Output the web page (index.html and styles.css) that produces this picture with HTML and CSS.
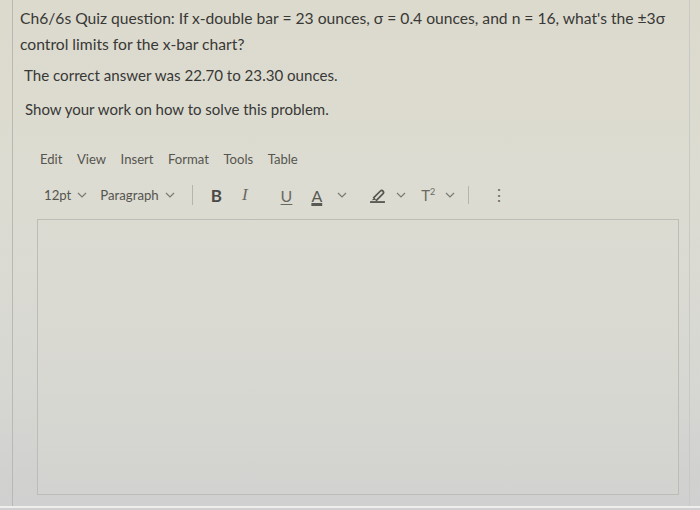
FILE: index.html
```html
<!DOCTYPE html>
<html>
<head>
<meta charset="utf-8">
<link rel="stylesheet" href="styles.css">
</head>
<body>
<div class="page">
  <div class="frame">
    <p class="q">Ch6/6s Quiz question: If x-double bar = 23 ounces, σ = 0.4 ounces, and n = 16, what's the ±3σ control limits for the x-bar chart?</p>
    <p class="p1">The correct answer was 22.70 to 23.30 ounces.</p>
    <p class="p2">Show your work on how to solve this problem.</p>
    <div class="editor">
      <div class="menu">
        <span>Edit</span><span>View</span><span>Insert</span><span>Format</span><span>Tools</span><span>Table</span>
      </div>
      <div class="toolbar">
        <span class="drop">12pt <svg class="chev" viewBox="0 0 10 6"><path d="M1 1l4 4 4-4"/></svg></span>
        <span class="drop para">Paragraph <svg class="chev" viewBox="0 0 10 6"><path d="M1 1l4 4 4-4"/></svg></span>
        <span class="sep"></span>
        <span class="btn b">B</span>
        <span class="btn i">I</span>
        <span class="btn u">U</span>
        <span class="btn a">A</span>
        <svg class="chev sm first" viewBox="0 0 10 6"><path d="M1 1l4 4 4-4"/></svg>
        <svg class="pen" viewBox="0 0 16 14"><path d="M4 9.5 L10.5 3 Q12 1.6 13.2 2.8 Q14.4 4 13 5.5 L6.5 12" fill="none"/><path d="M2.5 11.5 L5 9 L7 11 Z" class="fill"/><rect x="1" y="12.3" width="14" height="1.7" class="fill"/></svg>
        <svg class="chev sm" viewBox="0 0 10 6"><path d="M1 1l4 4 4-4"/></svg>
        <span class="btn t">T<sup>2</sup></span>
        <svg class="chev sm" viewBox="0 0 10 6"><path d="M1 1l4 4 4-4"/></svg>
        <span class="sep sep2"></span>
        <span class="more">⋮</span>
      </div>
      <div class="area"></div>
    </div>
  </div>
</div>
</body>
</html>
```
FILE: styles.css
```css
html, body {
  margin: 0;
  padding: 0;
}
body {
  width: 700px;
  height: 510px;
  overflow: hidden;
  font-family: Lato, "Open Sans", sans-serif;
  color: #383836;
  background: linear-gradient(180deg, #dcdacd 0%, #dddcd2 35%, #d8d8d3 70%, #cfd0cf 100%);
}
.page {
  height: 508px;
  border-bottom: 2px solid #eeeeec;
  box-sizing: border-box;
}
.frame {
  margin-left: 12px;
  margin-right: 10px;
  height: 100%;
  border-left: 1px solid #b9b8b2;
  border-right: 1px solid #c8c8c4;
  padding: 5px 0 0 7px;
  box-sizing: border-box;
}
.q {
  margin: 0;
  font-size: 15.65px;
  line-height: 26px;
  width: 655px;
}
.p1 {
  margin: 5px 0 0 4px;
  font-size: 15.1px;
  line-height: 26px;
}
.p2 {
  margin: 8px 0 0 5px;
  font-size: 15px;
  line-height: 26px;
}
.editor {
  margin: 28px 0 0 14px;
}
.menu {
  display: flex;
  gap: 14.5px;
  font-size: 13.1px;
  color: #55554f;
  margin-left: 6px;
  line-height: 18px;
}
.toolbar {
  display: flex;
  align-items: center;
  height: 22px;
  margin-top: 16px;
  margin-left: 10px;
  font-size: 13.2px;
  color: #55554f;
}
.drop {
  display: flex;
  align-items: center;
  gap: 6px;
}
.para {
  margin-left: 13px;
}
.chev {
  width: 10px;
  height: 6px;
  fill: none;
  stroke: #7a7a74;
  stroke-width: 1.2;
}
.chev.sm {
  margin-left: 10px;
}
.chev.first {
  margin-left: 15px;
}
.sep {
  width: 1px;
  height: 20px;
  background: #b5b4ad;
  margin: 0 16px 0 17px;
}
.btn {
  font-size: 16px;
  color: #4a4a46;
}
.b {
  font-weight: 700;
  font-size: 17px;
  margin-left: 2px;
}
.i {
  font-family: "Liberation Serif", serif;
  font-style: italic;
  margin-left: 20px;
  font-size: 17px;
  color: #6a6a64;
}
.u {
  margin-left: 33px;
  text-decoration: underline;
  text-underline-offset: 2px;
  color: #6a6a64;
}
.a {
  margin-left: 19px;
  text-decoration: underline;
  text-decoration-thickness: 3px;
  text-underline-offset: 1px;
  color: #5a5a55;
}
.pen {
  width: 17px;
  height: 15px;
  margin-left: 22px;
  stroke: #555550;
  stroke-width: 1.6;
}
.pen .fill {
  fill: #555550;
  stroke: none;
}
.t {
  margin-left: 15px;
  font-size: 15px;
  color: #6a6a64;
}
.t sup {
  font-size: 9px;
}
.sep2 {
  margin: 0 22px 0 13px;
  height: 18px;
}
.more {
  font-size: 16px;
  color: #6a6a64;
}
.area {
  margin-top: 13px;
  width: 642px;
  height: 276px;
  margin-left: 3px;
  border: 1px solid #bdbcb6;
  box-sizing: border-box;
  background: linear-gradient(180deg, #dcdbd2 0%, #d8d8d2 60%, #d2d2d0 100%);
}
```
